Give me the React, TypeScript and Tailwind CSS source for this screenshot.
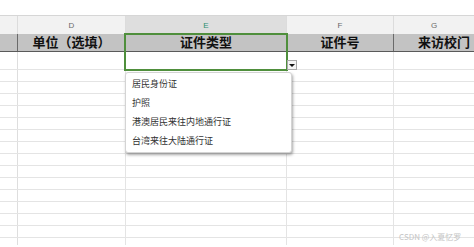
import React from "react";

const cjk = { fontFamily: '"Noto Sans CJK SC", "Noto Sans", sans-serif' };
const serif = { fontFamily: '"Liberation Serif", "Noto Sans CJK SC", serif' };

function GridRow({ h, last }: { h: string; last?: boolean }) {
  return (
    <div className={`flex ${h} ${last ? "" : "border-b border-[#e4e4e4]"}`}>
      <div className="w-[18px] shrink-0 border-r border-[#dedede]" />
      <div className="w-[108px] shrink-0 border-r border-[#e4e4e4]" />
      <div className="w-[161px] shrink-0 border-r border-[#e4e4e4]" />
      <div className="w-[107px] shrink-0 border-r border-[#e4e4e4]" />
      <div className="flex-1" />
    </div>
  );
}

export default function App() {
  const rows = Array.from({ length: 14 });
  return (
    <div className="relative w-[474px] h-[247px] bg-white overflow-hidden" style={cjk}>
      <div className="h-[16px] border-b border-[#d6d6d6]" />
      {/* column letters */}
      <div
        className="flex h-[18px] bg-[#f2f2f2] text-[8px] text-[#6a6a6a] leading-none"
        style={{ fontFamily: '"Liberation Sans", sans-serif' }}
      >
        <div className="w-[18px] shrink-0 border-r border-[#dcdcdc]" />
        <div className="w-[108px] shrink-0 border-r border-[#dcdcdc] flex items-center justify-center pt-[2px]">D</div>
        <div className="w-[161px] shrink-0 border-r border-[#dcdcdc] bg-[#dedede] flex items-center justify-center pt-[2px] text-[#2f8f6f]">E</div>
        <div className="w-[107px] shrink-0 border-r border-[#dcdcdc] flex items-center justify-center pt-[2px]">F</div>
        <div className="flex-1 flex items-center justify-center pt-[2px]">G</div>
      </div>
      {/* bold header row */}
      <div className="flex h-[18px] bg-[#c3c3c3] border-b border-[#5a5a5a] text-[13px] font-bold text-[#111] leading-none" style={serif}>
        <div className="w-[18px] shrink-0 border-r border-[#6a6a6a]" />
        <div className="w-[108px] shrink-0 border-r border-[#6a6a6a] flex items-center justify-center whitespace-nowrap">单位（选填）</div>
        <div className="w-[161px] shrink-0 border-r border-[#6a6a6a] flex items-center justify-center">证件类型</div>
        <div className="w-[107px] shrink-0 border-r border-[#6a6a6a] flex items-center justify-center">证件号</div>
        <div className="flex-1 flex items-center justify-start pl-[24px] whitespace-nowrap overflow-hidden">来访校门</div>
      </div>
      <GridRow h="h-[18px]" />
      {rows.map((_, i) => (
        <GridRow key={i} h="h-[12px]" />
      ))}
      <GridRow h="h-[7px]" last />

      {/* selection outline */}
      <div className="absolute left-[124px] top-[33px] w-[164px] h-[38px] border-2 border-[#4f8f3c] pointer-events-none" />

      {/* dropdown button */}
      <div className="absolute left-[287px] top-[60px] w-[10px] h-[10px] border border-[#a8a8a8] bg-[#f4f4f4] flex items-center justify-center">
        <div className="w-0 h-0 border-l-[3px] border-r-[3px] border-t-[3px] border-l-transparent border-r-transparent border-t-[#111]" />
      </div>

      {/* dropdown list */}
      <div className="absolute left-[125px] top-[72px] w-[167px] h-[81px] bg-white border border-[#d4d4d4] rounded-[3px] shadow-[1px_2px_3px_rgba(0,0,0,0.35)] pt-[1px] text-[9px] text-[#333] leading-none">
        {["居民身份证", "护照", "港澳居民来往内地通行证", "台湾来往大陆通行证"].map((t) => (
          <div key={t} className="h-[19px] flex items-center pl-[6px] whitespace-nowrap">
            {t}
          </div>
        ))}
      </div>

      {/* watermark */}
      <div className="absolute left-[399px] top-[233px] text-[8px] leading-none text-[#c4c4c4] whitespace-nowrap">
        CSDN @入夏忆罗
      </div>
    </div>
  );
}
